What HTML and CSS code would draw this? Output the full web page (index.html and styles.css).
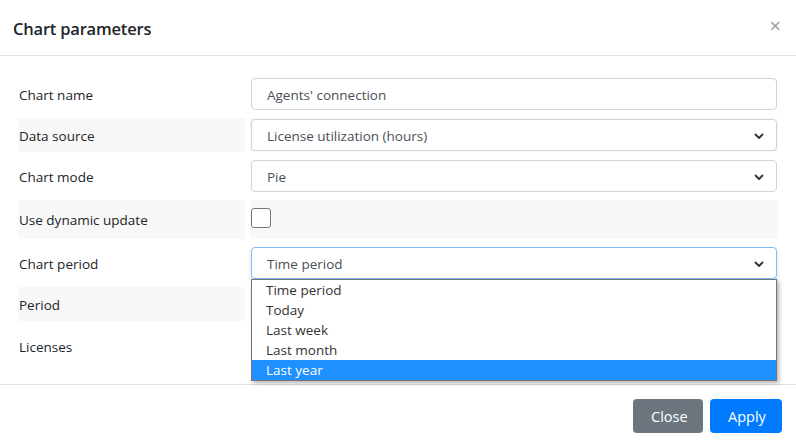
FILE: index.html
```html
<!DOCTYPE html>
<html>
<head>
<meta charset="utf-8">
<link rel="stylesheet" href="styles.css">
</head>
<body>
<div class="modal">
  <div class="modal-header">
    <h5 class="modal-title">Chart parameters</h5>
    <span class="close">&times;</span>
  </div>
  <div class="modal-body">
    <div class="form-grid">
      <div class="label">Chart name</div>
      <div class="ctrl"><div class="form-control">Agents' connection</div></div>

      <div class="label striped">Data source</div>
      <div class="ctrl striped"><div class="form-control select">License utilization (hours)<svg class="chev" viewBox="0 0 10 6" width="10" height="6"><path d="M1 1 L5 5 L9 1" fill="none" stroke="#343a40" stroke-width="2"/></svg></div></div>

      <div class="label">Chart mode</div>
      <div class="ctrl"><div class="form-control select">Pie<svg class="chev" viewBox="0 0 10 6" width="10" height="6"><path d="M1 1 L5 5 L9 1" fill="none" stroke="#343a40" stroke-width="2"/></svg></div></div>

      <div class="label striped">Use dynamic update</div>
      <div class="ctrl striped"><span class="checkbox"></span></div>

      <div class="label">Chart period</div>
      <div class="ctrl">
        <div class="form-control select focus">Time period<svg class="chev" viewBox="0 0 10 6" width="10" height="6"><path d="M1 1 L5 5 L9 1" fill="none" stroke="#343a40" stroke-width="2"/></svg></div>
        <ul class="dropdown">
          <li>Time period</li>
          <li>Today</li>
          <li>Last week</li>
          <li>Last month</li>
          <li class="sel">Last year</li>
        </ul>
      </div>

      <div class="label striped">Period</div>
      <div class="ctrl striped"></div>

      <div class="label">Licenses</div>
      <div class="ctrl"></div>
    </div>
  </div>
  <div class="modal-footer">
    <button class="btn btn-secondary">Close</button>
    <button class="btn btn-primary">Apply</button>
  </div>
</div>
</body>
</html>
```

FILE: styles.css
```css
html, body {
  margin: 0;
  padding: 0;
  background: #fff;
}
body {
  font-family: "Open Sans", "Noto Sans", sans-serif;
  color: #212529;
  width: 796px;
  height: 445px;
  overflow: hidden;
}
.modal {
  display: flex;
  flex-direction: column;
}
.modal-header {
  height: 55px;
  border-bottom: 1px solid #dee2e6;
  display: flex;
  align-items: center;
  justify-content: space-between;
  padding: 0 15px 0 13px;
}
.modal-title {
  margin: 0;
  font-size: 16.5px;
  font-weight: 600;
  letter-spacing: -0.2px;
  color: #212529;
  padding-top: 1px;
}
.close {
  font-size: 20px;
  font-weight: 400;
  color: #9a9a9a;
  line-height: 1;
  padding-bottom: 4px;
}
.modal-body {
  padding: 22px 18px 20px 18px;
}
.form-grid {
  display: grid;
  grid-template-columns: 227px 1fr;
  grid-template-rows: 32px 34px 32px 39px 32px 34px 35px;
  column-gap: 5px;
  row-gap: 8px;
  font-size: 13.5px;
}
.label {
  display: flex;
  align-items: center;
  padding-left: 1px;
  padding-top: 1px;
  color: #212529;
}
.striped {
  background: #f8f8f8;
}
.ctrl {
  display: flex;
  align-items: center;
  position: relative;
}
.form-control {
  box-sizing: border-box;
  width: 100%;
  height: 32px;
  border: 1px solid #ced4da;
  border-radius: 4px;
  background: #fff;
  padding: 1px 12px 0 15px;
  display: flex;
  align-items: center;
  justify-content: space-between;
  color: #495057;
  margin-left: 1px;
  margin-right: 1px;
}
.form-control.focus {
  border-color: #80bdff;
  box-shadow: 0 2px 4px rgba(0, 0, 0, 0.12);
}
.chev {
  display: block;
}
.checkbox {
  display: block;
  width: 18px;
  height: 18px;
  border: 1px solid #767676;
  border-radius: 3px;
  background: #fff;
  margin-left: 1px;
  margin-top: -3px;
}
.dropdown {
  position: absolute;
  top: 32px;
  left: 1px;
  right: 1px;
  margin: 0;
  padding: 0;
  list-style: none;
  background: #fff;
  border: 1px solid #767676;
  box-shadow: 2px 2px 4px rgba(0, 0, 0, 0.3);
  z-index: 5;
  font-size: 13.5px;
}
.dropdown li {
  height: 20px;
  line-height: 21px;
  padding-left: 14px;
  color: #333;
}
.dropdown li.sel {
  background: #1e90ff;
  color: #fff;
}
.modal-footer {
  border-top: 1px solid #dee2e6;
  display: flex;
  justify-content: flex-end;
  gap: 7px;
  padding: 14px 14px 0 14px;
}
.btn {
  font-family: inherit;
  font-size: 14.5px;
  height: 34px;
  border: none;
  border-radius: 4px;
  color: #fff;
  padding: 0 18px;
}
.btn-secondary {
  background: #6c757d;
  width: 70px;
}
.btn-primary {
  background: #007bff;
  width: 72px;
}
```
